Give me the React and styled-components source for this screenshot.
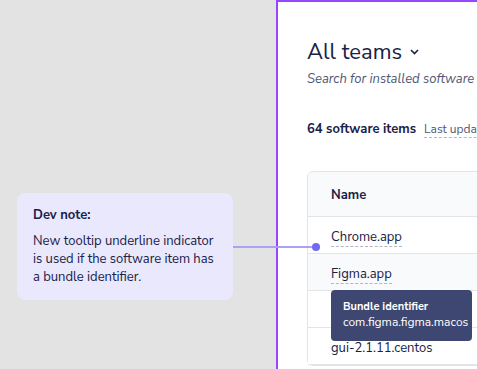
import styled, { createGlobalStyle } from 'styled-components';

const Global = createGlobalStyle`
  html, body { margin: 0; padding: 0; }
  body {
    font-family: "Nunito Sans", Lato, "Open Sans", sans-serif;
    color: #192147;
    overflow: hidden;
  }
`;

const Page = styled.div`
  position: relative;
  display: flex;
  height: 369px;
  background: #e3e3e3;
  overflow: hidden;
`;

const NoteColumn = styled.div`
  width: 276px;
  flex-shrink: 0;
  padding: 193px 0 0 17px;
  box-sizing: border-box;
`;

const Note = styled.div`
  width: 216px;
  box-sizing: border-box;
  padding: 13px 16px 14px;
  background: #e9e8fc;
  border-radius: 8px;

  h4 {
    margin: 0 0 8px;
    font-size: 13px;
    line-height: 18px;
    font-weight: 700;
  }

  p {
    margin: 0;
    font-size: 13px;
    line-height: 18px;
  }
`;

const Panel = styled.div`
  flex: 1;
  min-width: 0;
  background: #fff;
  border-top: 2px solid #9747ff;
  border-left: 2px solid #9747ff;
  padding: 34px 0 0 29px;
  overflow: hidden;
`;

const Title = styled.h1`
  margin: 0;
  display: flex;
  align-items: center;
  gap: 8px;
  font-size: 22px;
  line-height: 32px;
  font-weight: 400;
  white-space: nowrap;
`;

const Subtitle = styled.p`
  margin: 3px 0 0;
  font-size: 13px;
  line-height: 16px;
  font-style: italic;
  color: #515774;
  white-space: nowrap;
`;

const CountRow = styled.div`
  display: flex;
  align-items: baseline;
  gap: 8px;
  margin-top: 33px;
  white-space: nowrap;
`;

const Count = styled.span`
  font-size: 13px;
  font-weight: 700;
`;

const Updated = styled.span`
  font-size: 12px;
  color: #515774;
  border-bottom: 1px dashed #b3b6c4;
`;

const Table = styled.div`
  margin-top: 33px;
  width: 320px;
  border: 1px solid #e2e4ea;
  border-radius: 6px;
  background: #fff;
`;

const HeadCell = styled.div`
  height: 45px;
  box-sizing: border-box;
  padding: 2px 0 0 23px;
  display: flex;
  align-items: center;
  font-size: 13px;
  font-weight: 700;
  background: #f9fafc;
  border-radius: 6px 6px 0 0;
  border-bottom: 1px solid #e2e4ea;
`;

const Row = styled.div`
  position: relative;
  height: 36px;
  display: flex;
  align-items: center;
  padding-left: 23px;
  font-size: 13px;
  border-bottom: 1px solid #e2e4ea;
  background: ${p => (p.$hover ? '#f9fafc' : '#fff')};
`;

const Underlined = styled.span`
  position: relative;
  top: 2px;
  line-height: 18px;
  border-bottom: 1px dashed #b3b6c4;
`;

const Plain = styled.span`
  position: relative;
  top: 2px;
`;

const Tooltip = styled.div`
  position: absolute;
  left: 0;
  top: 25px;
  z-index: 2;
  width: 141px;
  height: 51px;
  box-sizing: border-box;
  padding: 9px 12px 0;
  background: #3e4771;
  border-radius: 4px;
  color: #fff;
  white-space: nowrap;
`;

const TipTitle = styled.div`
  font-size: 11px;
  line-height: 16px;
  font-weight: 700;
`;

const TipValue = styled.div`
  font-size: 12px;
  line-height: 15px;
`;

const Connector = styled.div`
  position: absolute;
  left: 233px;
  top: 246px;
  width: 82px;
  height: 2px;
  background: #a8a3f7;

  &::after {
    content: '';
    position: absolute;
    right: -5px;
    top: -3px;
    width: 8px;
    height: 8px;
    border-radius: 50%;
    background: #6e6af4;
  }
`;

export default function App() {
  return (
    <Page>
      <Global />
      <NoteColumn>
        <Note>
          <h4>Dev note:</h4>
          <p>
            New tooltip underline indicator<br />
            is used if the software item has<br />
            a bundle identifier.
          </p>
        </Note>
      </NoteColumn>
      <Panel>
        <Title>
          All teams
          <svg width="9" height="6" viewBox="0 0 9 6">
            <path d="M1 1l3.5 3.5L8 1" fill="none" stroke="#192147" strokeWidth="1.6" />
          </svg>
        </Title>
        <Subtitle>Search for installed software and manage automations</Subtitle>
        <CountRow>
          <Count>64 software items</Count>
          <Updated>Last updated 2 hours ago</Updated>
        </CountRow>
        <Table>
          <HeadCell>Name</HeadCell>
          <Row><Underlined>Chrome.app</Underlined></Row>
          <Row $hover>
            <Underlined>
              Figma.app
              <Tooltip>
                <TipTitle>Bundle identifier</TipTitle>
                <TipValue>com.figma.figma.macos</TipValue>
              </Tooltip>
            </Underlined>
          </Row>
          <Row />
          <Row><Plain>gui-2.1.11.centos</Plain></Row>
        </Table>
      </Panel>
      <Connector />
    </Page>
  );
}
